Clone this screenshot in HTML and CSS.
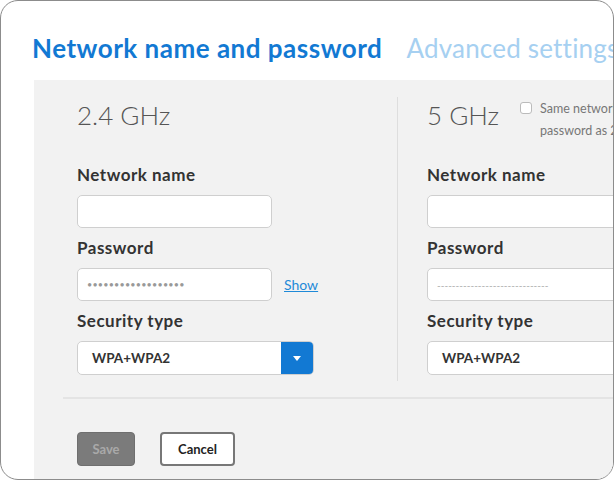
FILE: index.html
```html
<!DOCTYPE html>
<html lang="en">

<head>
    <meta charset="UTF-8">
    <meta name="viewport" content="width=device-width, initial-scale=1.0">
    <title>Wi-Fi settings</title>
    <link rel="stylesheet" href="styles.css">
</head>

<body>
    <div class="frame">
        <div class="tabs">
            <span class="tab tab-active">Network name and password</span>
            <span class="tab">Advanced settings</span>
        </div>
        <div class="panel">
            <div class="bands">
                <div class="band">
                    <div class="band-head">
                        <h2 class="band-title">2.4 GHz</h2>
                    </div>
                    <label class="field-label">Network name</label>
                    <div class="field-row">
                        <input type="text" class="text-input">
                    </div>
                    <label class="field-label">Password</label>
                    <div class="field-row">
                        <input type="text" class="text-input pwd" value="&bull;&bull;&bull;&bull;&bull;&bull;&bull;&bull;&bull;&bull;&bull;&bull;&bull;&bull;&bull;&bull;&bull;&bull;">
                        <a href="#" class="show-link">Show</a>
                    </div>
                    <label class="field-label">Security type</label>
                    <div class="select">
                        <span class="select-value">WPA+WPA2</span>
                        <span class="select-btn">
                            <svg width="8" height="5" viewBox="0 0 8 5"><path d="M0 0h8L4 5z" fill="#fff"/></svg>
                        </span>
                    </div>
                </div>
                <div class="band band-second">
                    <div class="band-head">
                        <h2 class="band-title">5 GHz</h2>
                        <label class="same-check">
                            <span class="checkbox"></span>
                            <span>Same network name and<br>password as 2.4 GHz</span>
                        </label>
                    </div>
                    <label class="field-label">Network name</label>
                    <div class="field-row">
                        <input type="text" class="text-input wide">
                    </div>
                    <label class="field-label">Password</label>
                    <div class="field-row">
                        <input type="text" class="text-input wide dashes" value="------------------------------">
                    </div>
                    <label class="field-label">Security type</label>
                    <div class="select wide">
                        <span class="select-value">WPA+WPA2</span>
                    </div>
                </div>
            </div>
            <div class="actions">
                <button class="btn btn-save" disabled>Save</button>
                <button class="btn btn-cancel">Cancel</button>
            </div>
        </div>
    </div>
</body>

</html>
```

FILE: styles.css
```css
* {
    box-sizing: border-box;
}

body {
    margin: 0;
    width: 614px;
    height: 480px;
    overflow: hidden;
    font-family: Lato, "Open Sans", sans-serif;
    color: #333;
}

.frame {
    width: 614px;
    height: 480px;
    border: 1px solid #8c8c8c;
    border-radius: 18px;
    overflow: hidden;
    background: #fff;
    display: flex;
    flex-direction: column;
}

.tabs {
    height: 79px;
    flex-shrink: 0;
    padding: 31px 0 0 31px;
    white-space: nowrap;
}

.tab {
    font-size: 26px;
    font-weight: 400;
    color: #a6d0f1;
    margin-right: 20px;
    letter-spacing: 0.2px;
}

.tab-active {
    font-weight: 700;
    color: #1279d3;
    letter-spacing: 0.5px;
}

.panel {
    flex: 1;
    margin-left: 33px;
    background: #f2f2f2;
    padding-top: 17px;
}

.bands {
    display: flex;
    padding-bottom: 16px;
    border-bottom: 2px solid #e4e4e4;
    margin-left: 29px;
}

.band {
    width: 334px;
    padding: 0 0 6px 14px;
    flex-shrink: 0;
}

.band-second {
    border-left: 1px solid #dedede;
    padding-left: 29px;
    width: 400px;
}

.band-head {
    display: flex;
}

.band-title {
    margin: 0 0 22px;
    font-size: 26px;
    font-weight: 300;
    color: #555;
    line-height: 36px;
}

.same-check {
    display: flex;
    margin: 1px 0 0 21px;
    font-size: 12.5px;
    line-height: 22px;
    color: #777;
    white-space: nowrap;
}

.checkbox {
    flex-shrink: 0;
    width: 12px;
    height: 12px;
    border: 1px solid #bbb;
    border-radius: 3px;
    background: #fff;
    margin: 4px 8px 0 0;
}

.field-label {
    display: block;
    font-size: 17px;
    font-weight: 700;
    letter-spacing: 0.5px;
    color: #333;
    line-height: 20px;
    margin: 10px 0;
}

.field-row {
    display: flex;
    align-items: center;
}

.text-input {
    width: 195px;
    height: 33px;
    border: 1px solid #cfcfcf;
    border-radius: 5px;
    background: #fff;
    padding: 0 9px;
    font-family: inherit;
    font-size: 9px;
    color: #999;
    letter-spacing: 0.2px;
}

.text-input.wide {
    width: 240px;
}

.dashes {
    font-size: 10px;
    letter-spacing: 0;
    color: #aaa;
}

.show-link {
    margin-left: 12px;
    font-size: 14px;
    color: #1f8ad8;
}

.select {
    display: flex;
    width: 237px;
    height: 34px;
    border: 1px solid #cfcfcf;
    border-radius: 5px;
    background: #fff;
    overflow: hidden;
}

.select.wide {
    width: 240px;
}

.select-value {
    flex: 1;
    padding-left: 14px;
    line-height: 32px;
    font-size: 13.5px;
    font-weight: 700;
    color: #333;
}

.select-btn {
    width: 32px;
    background: #1279d3;
    display: flex;
    align-items: center;
    justify-content: center;
}

.actions {
    display: flex;
    gap: 25px;
    padding: 33px 0 0 43px;
}

.btn {
    height: 34px;
    border-radius: 4px;
    font-family: inherit;
    font-size: 13px;
    font-weight: 700;
    padding: 0;
}

.btn-save {
    width: 58px;
    background: #7b7b7b;
    border: 1px solid #6f6f6f;
    color: #a9a9a9;
}

.btn-cancel {
    width: 75px;
    background: #fff;
    border: 2px solid #777;
    color: #222;
}
```
